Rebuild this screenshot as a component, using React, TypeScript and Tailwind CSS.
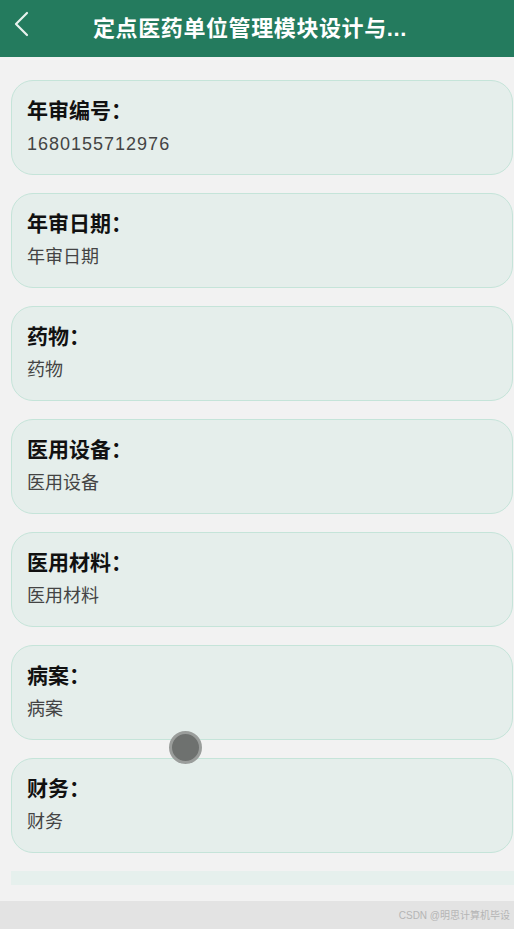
import React from 'react';

const items = [
  { label: '年审编号：', value: '1680155712976' },
  { label: '年审日期：', value: '年审日期' },
  { label: '药物：', value: '药物' },
  { label: '医用设备：', value: '医用设备' },
  { label: '医用材料：', value: '医用材料' },
  { label: '病案：', value: '病案' },
  { label: '财务：', value: '财务' },
];

export default function App() {
  return (
    <div
      className="relative w-[514px] h-[929px] overflow-hidden bg-[#f2f2f2] flex flex-col"
      style={{ fontFamily: '"Liberation Sans", "Noto Sans CJK SC", sans-serif' }}
    >
      <div className="h-[57px] bg-[#247b5e] flex items-center relative shrink-0">
        <svg className="absolute left-[12px] top-[11px]" width="18" height="26" viewBox="0 0 18 26" fill="none">
          <path d="M15 2 L4 13 L15 24" stroke="#e8f2ee" strokeWidth="2.2" strokeLinecap="round" strokeLinejoin="round" />
        </svg>
        <div className="ml-[93px] text-white font-bold text-[22px] tracking-[0.6px] leading-none whitespace-nowrap">
          定点医药单位管理模块设计与...
        </div>
      </div>

      <div className="flex flex-col gap-[18px] pl-[11px] pr-[1px] pt-[23px]">
        {items.map((it) => (
          <div
            key={it.label}
            className="h-[95px] rounded-[22px] border border-[#c5e4d9] bg-[#e5eeeb] pl-[15px] pt-[17px]"
          >
            <div className="text-[21px] font-bold text-[#111] leading-[26px]">{it.label}</div>
            <div
              className={
                /^\d+$/.test(it.value)
                  ? 'text-[18px] tracking-[1px] text-[#444] leading-[24px] mt-[8px]'
                  : 'text-[18px] text-[#444] leading-[24px] mt-[8px]'
              }
            >
              {it.value}
            </div>
          </div>
        ))}
      </div>

      <div className="ml-[11px] mt-[18px] h-[14px] bg-[#e6f0ed]" />

      <div className="mt-auto h-[28px] bg-[#e3e3e3] flex items-center justify-end pr-[4px]">
        <span className="text-[10px] text-[#b5b5b5]">CSDN @明思计算机毕设</span>
      </div>

      <div className="absolute left-[169px] top-[731px] w-[33px] h-[33px] rounded-full bg-[#6e716f] border-[3px] border-[#9a9d9b]" />
    </div>
  );
}
